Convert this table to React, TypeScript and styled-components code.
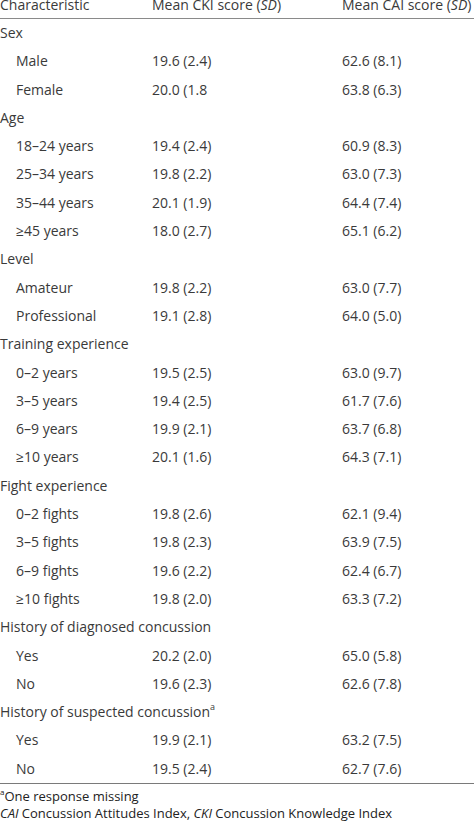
import styled, { createGlobalStyle } from 'styled-components';
import { FC } from 'react';

const GlobalStyle = createGlobalStyle`
  html, body {
    margin: 0;
    padding: 0;
    background: #fff;
    overflow: hidden;
  }
  body {
    font-family: 'Open Sans', 'Noto Sans', sans-serif;
    color: #3a3a3a;
  }
`;

const StyleTable = styled.div`
  width: 474px;
  overflow: hidden;
  font-size: 14px;
`;

const HeaderRow = styled.div`
  display: grid;
  grid-template-columns: 152px 190px 1fr;
  height: 18px;
  line-height: 14px;
  border-bottom: 1.5px solid #8a8a8a;
  white-space: nowrap;
  span {
    margin-top: -2px;
  }
`;

const Row = styled.div<{ $indent?: boolean }>`
  display: grid;
  grid-template-columns: 152px 190px 1fr;
  height: 28.3px;
  line-height: 28.3px;
  white-space: nowrap;
  .label {
    padding-left: ${p => (p.$indent ? '16px' : '0')};
  }
`;

const Body = styled.div`
  border-bottom: 1.5px solid #7a7a7a;
`;

const Footnotes = styled.div`
  padding-top: 4px;
  font-size: 13px;
  line-height: 17px;
  color: #222;
  white-space: nowrap;
  sup {
    font-size: 8px;
    line-height: 0;
    vertical-align: 6px;
  }
`;

interface Group {
  title: string;
  sup?: string;
  rows: [string, string, string][];
}

const groups: Group[] = [
  { title: 'Sex', rows: [['Male', '19.6 (2.4)', '62.6 (8.1)'], ['Female', '20.0 (1.8', '63.8 (6.3)']] },
  {
    title: 'Age',
    rows: [
      ['18–24 years', '19.4 (2.4)', '60.9 (8.3)'],
      ['25–34 years', '19.8 (2.2)', '63.0 (7.3)'],
      ['35–44 years', '20.1 (1.9)', '64.4 (7.4)'],
      ['≥45 years', '18.0 (2.7)', '65.1 (6.2)']
    ]
  },
  { title: 'Level', rows: [['Amateur', '19.8 (2.2)', '63.0 (7.7)'], ['Professional', '19.1 (2.8)', '64.0 (5.0)']] },
  {
    title: 'Training experience',
    rows: [
      ['0–2 years', '19.5 (2.5)', '63.0 (9.7)'],
      ['3–5 years', '19.4 (2.5)', '61.7 (7.6)'],
      ['6–9 years', '19.9 (2.1)', '63.7 (6.8)'],
      ['≥10 years', '20.1 (1.6)', '64.3 (7.1)']
    ]
  },
  {
    title: 'Fight experience',
    rows: [
      ['0–2 fights', '19.8 (2.6)', '62.1 (9.4)'],
      ['3–5 fights', '19.8 (2.3)', '63.9 (7.5)'],
      ['6–9 fights', '19.6 (2.2)', '62.4 (6.7)'],
      ['≥10 fights', '19.8 (2.0)', '63.3 (7.2)']
    ]
  },
  {
    title: 'History of diagnosed concussion',
    rows: [['Yes', '20.2 (2.0)', '65.0 (5.8)'], ['No', '19.6 (2.3)', '62.6 (7.8)']]
  },
  {
    title: 'History of suspected concussion',
    sup: 'a',
    rows: [['Yes', '19.9 (2.1)', '63.2 (7.5)'], ['No', '19.5 (2.4)', '62.7 (7.6)']]
  }
];

const App: FC = () => {
  return (
    <>
      <GlobalStyle />
      <StyleTable>
        <HeaderRow>
          <span>Characteristic</span>
          <span>
            Mean CKI score (<i>SD</i>)
          </span>
          <span>
            Mean CAI score (<i>SD</i>)
          </span>
        </HeaderRow>
        <Body>
          {groups.map(group => (
            <div key={group.title}>
              <Row>
                <span className="label">
                  {group.title}
                  {group.sup && <Sup>{group.sup}</Sup>}
                </span>
                <span />
                <span />
              </Row>
              {group.rows.map(([label, cki, cai]) => (
                <Row $indent key={group.title + label}>
                  <span className="label">{label}</span>
                  <span>{cki}</span>
                  <span>{cai}</span>
                </Row>
              ))}
            </div>
          ))}
        </Body>
        <Footnotes>
          <div>
            <sup>a</sup>One response missing
          </div>
          <div>
            <i>CAI</i> Concussion Attitudes Index, <i>CKI</i> Concussion Knowledge Index
          </div>
        </Footnotes>
      </StyleTable>
    </>
  );
};

const Sup = styled.sup`
  font-size: 9px;
  line-height: 0;
  vertical-align: 7px;
`;

export default App;
